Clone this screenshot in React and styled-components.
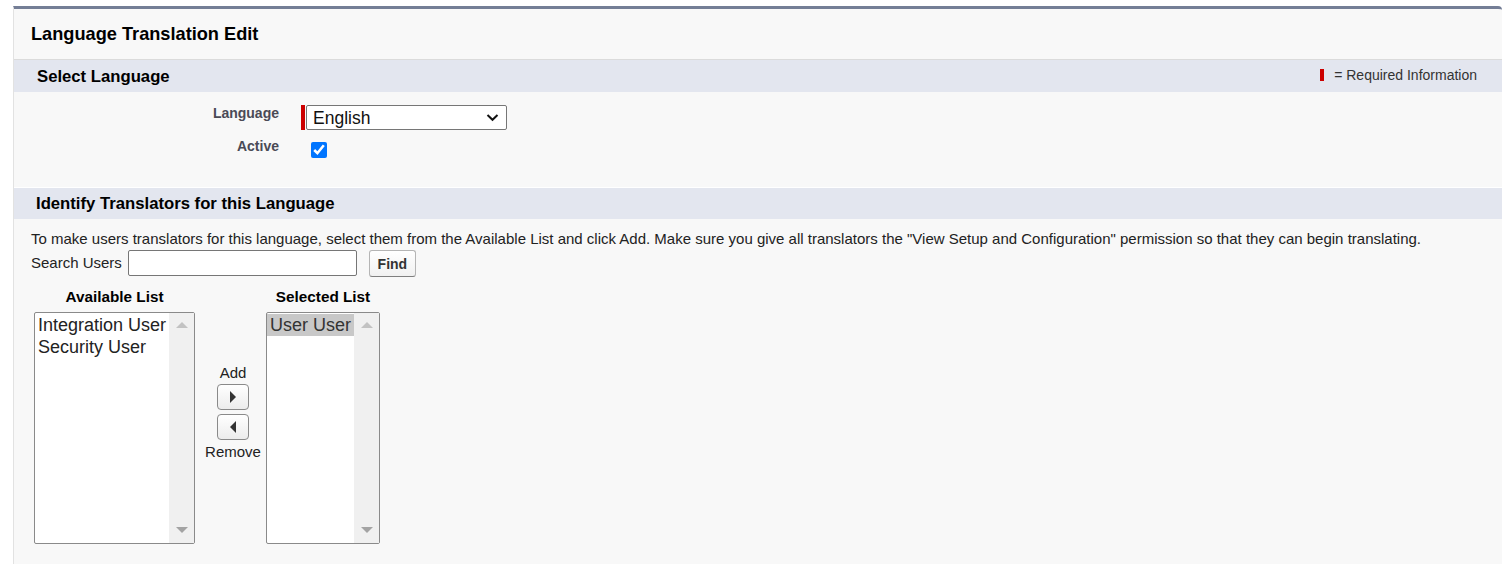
import React from "react";
import styled, { createGlobalStyle } from "styled-components";

const GlobalStyle = createGlobalStyle`
  body {
    margin: 0;
    background: #ffffff;
    font-family: "Liberation Sans", Arial, sans-serif;
    color: #181818;
  }
`;

const Page = styled.div`
  padding: 6px 2px 0 13px;
`;

const Card = styled.div`
  background: #f8f8f8;
  border-top: 3px solid #747e96;
  border-left: 1px solid #e2e2e2;
  border-top-right-radius: 4px;
  min-height: 555px;
`;

const TitleBar = styled.div`
  height: 50px;
  display: flex;
  align-items: center;
  padding-left: 17px;
  border-bottom: 1px solid #dbdbdb;
  font-size: 18.2px;
  font-weight: bold;
  color: #000;
`;

const SectionHeader = styled.div`
  height: 31px;
  display: flex;
  align-items: center;
  justify-content: space-between;
  padding: 0 25px 0 ${({ $indent }) => $indent}px;
  background: #e3e6ef;
  border-top: 1px solid ${({ $line }) => $line || "transparent"};
  font-size: 16.7px;
  font-weight: bold;
  color: #000;
`;

const Required = styled.div`
  display: flex;
  align-items: center;
  gap: 10px;
  margin-top: -4px;
  font-size: 14px;
  font-weight: normal;
  color: #333;
`;

const RedBar = styled.span`
  display: inline-block;
  flex-shrink: 0;
  width: 4px;
  height: ${({ $h }) => $h}px;
  background: #c00;
`;

const FormBody = styled.div`
  padding: 13px 0 29px;
  display: grid;
  grid-template-columns: 265px auto;
  column-gap: 22px;
  row-gap: 8px;
  align-items: start;
`;

const Label = styled.div`
  text-align: right;
  font-size: 14px;
  line-height: 16px;
  font-weight: bold;
  color: #4a4a56;
`;

const Field = styled.div`
  display: flex;
  align-items: stretch;
`;

const SelectWrap = styled.div`
  position: relative;
  margin-left: 1px;
`;

const Select = styled.select`
  appearance: none;
  display: block;
  width: 201px;
  height: 25px;
  margin: 0;
  padding: 0 24px 0 6px;
  font-family: "Liberation Sans", Arial, sans-serif;
  font-size: 17.5px;
  color: #111;
  background: #fff;
  border: 1px solid #767676;
  border-radius: 2px;
`;

const Chevron = styled.svg`
  position: absolute;
  right: 8px;
  top: 8px;
  width: 13px;
  height: 9px;
  pointer-events: none;
`;

const Check = styled.input`
  width: 16px;
  height: 16px;
  margin: 4px 0 0 10px;
  accent-color: #0075ff;
`;

const TranslatorsBody = styled.div`
  padding: 10px 17px 20px;
  font-size: 15px;
  color: #222;
`;

const Intro = styled.div`
  line-height: 20px;
  white-space: nowrap;
`;

const SearchRow = styled.div`
  display: flex;
  align-items: center;
  margin-top: -1px;
`;

const SearchInput = styled.input`
  width: 229px;
  height: 26px;
  box-sizing: border-box;
  margin: 0 12px 0 6px;
  border: 1px solid #767676;
  border-radius: 2px;
  background: #fff;
`;

const Button = styled.button`
  font-family: "Liberation Sans", Arial, sans-serif;
  font-size: 14px;
  font-weight: bold;
  color: #333;
  height: 27px;
  width: 47px;
  margin-top: 2px;
  border: 1px solid #b5b5b5;
  border-bottom-color: #7f7f7f;
  border-radius: 3px;
  background: linear-gradient(#ffffff, #f1f1f1);
  padding: 0;
`;

const Lists = styled.div`
  display: flex;
  align-items: flex-start;
  margin-top: 11px;
`;

const ListColumn = styled.div`
  display: flex;
  flex-direction: column;
  align-items: center;
  margin-left: ${({ $ml }) => $ml}px;
`;

const ListTitle = styled.div`
  font-size: 15.3px;
  line-height: 17px;
  font-weight: bold;
  color: #000;
  margin-bottom: 7px;
`;

const ListBox = styled.div`
  width: ${({ $w }) => $w}px;
  height: 232px;
  box-sizing: border-box;
  border: 1px solid #8a8a8a;
  border-radius: 2px;
  background: #fff;
  display: flex;
`;

const Items = styled.div`
  flex: 1;
  min-width: 0;
  padding-top: 1px;
  font-size: 18px;
  color: #222;
`;

const Item = styled.div`
  height: 22px;
  line-height: 22px;
  padding-left: 3px;
  white-space: nowrap;
  background: ${({ $selected }) => ($selected ? "#c8c8c8" : "transparent")};
  color: ${({ $selected }) => ($selected ? "#333" : "#222")};
`;

const Track = styled.div`
  width: 25px;
  flex-shrink: 0;
  background: #f0f0f0;
  display: flex;
  flex-direction: column;
  justify-content: space-between;
  align-items: center;
  padding: 9px 0 10px;
`;

const Arrow = styled.span`
  width: 0;
  height: 0;
  border-left: 6px solid transparent;
  border-right: 6px solid transparent;
  ${({ $up }) =>
    $up ? "border-bottom: 6px solid #c2c2c2;" : "border-top: 6px solid #a3a3a3;"}
`;

const Mover = styled.div`
  margin: 77px 0 0 9px;
  width: 58px;
  display: flex;
  flex-direction: column;
  align-items: center;
  gap: 4px;
  font-size: 15px;
  line-height: 15px;
  color: #222;
`;

const MoveButton = styled.button`
  width: 32px;
  height: 26px;
  padding: 0;
  border: 1px solid #8a8a8a;
  border-radius: 4px;
  background: linear-gradient(#ffffff, #ececec);
  display: flex;
  align-items: center;
  justify-content: center;
`;

const Tri = styled.span`
  width: 0;
  height: 0;
  border-top: 6px solid transparent;
  border-bottom: 6px solid transparent;
  ${({ $left }) =>
    $left ? "border-right: 6px solid #333;" : "border-left: 6px solid #333;"}
`;

function UserList({ width, items, selected }) {
  return (
    <ListBox $w={width}>
      <Items>
        {items.map((name) => (
          <Item key={name} $selected={name === selected}>
            {name}
          </Item>
        ))}
      </Items>
      <Track>
        <Arrow $up />
        <Arrow />
      </Track>
    </ListBox>
  );
}

export default function App() {
  return (
    <Page>
      <GlobalStyle />
      <Card>
        <TitleBar>Language Translation Edit</TitleBar>
        <SectionHeader $indent={23}>
          Select Language
          <Required>
            <RedBar $h={12} />= Required Information
          </Required>
        </SectionHeader>
        <FormBody>
          <Label>Language</Label>
          <Field>
            <RedBar $h={25} />
            <SelectWrap>
              <Select defaultValue="en">
                <option value="en">English</option>
              </Select>
              <Chevron viewBox="0 0 13 9">
                <path
                  d="M1.5 2l5 4.8L11.5 2"
                  fill="none"
                  stroke="#111"
                  strokeWidth="2"
                />
              </Chevron>
            </SelectWrap>
          </Field>
          <Label>Active</Label>
          <Field>
            <Check type="checkbox" defaultChecked />
          </Field>
        </FormBody>
        <SectionHeader $indent={22} $line="#ffffff">
          Identify Translators for this Language
        </SectionHeader>
        <TranslatorsBody>
          <Intro>
            To make users translators for this language, select them from the
            Available List and click Add. Make sure you give all translators the
            "View Setup and Configuration" permission so that they can begin
            translating.
          </Intro>
          <SearchRow>
            Search Users
            <SearchInput type="text" />
            <Button>Find</Button>
          </SearchRow>
          <Lists>
            <ListColumn $ml={3}>
              <ListTitle>Available List</ListTitle>
              <UserList
                width={161}
                items={["Integration User", "Security User"]}
              />
            </ListColumn>
            <Mover>
              Add
              <MoveButton aria-label="Add">
                <Tri />
              </MoveButton>
              <MoveButton aria-label="Remove">
                <Tri $left />
              </MoveButton>
              Remove
            </Mover>
            <ListColumn $ml={4}>
              <ListTitle>Selected List</ListTitle>
              <UserList width={114} items={["User User"]} selected="User User" />
            </ListColumn>
          </Lists>
        </TranslatorsBody>
      </Card>
    </Page>
  );
}
